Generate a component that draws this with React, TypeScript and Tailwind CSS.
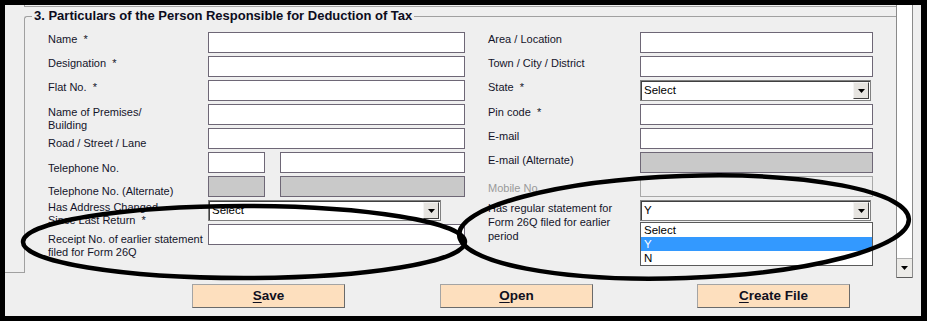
import React from 'react'

const LABEL = 'mt-[1px] text-[11px] leading-[13px] text-[#14142a]'
const INPUT = 'h-[21px] border border-[#6e6776] bg-white'
const GRAY = 'h-[21px] border border-[#6e6776] bg-[#c9c9c9]'

const Arrow = () => (
  <svg width="7" height="4" viewBox="0 0 7 4">
    <path d="M0 0h7L3.5 4z" fill="#000" />
  </svg>
)

const Select = ({ value, className }: { value: string; className: string }) => (
  <div
    className={`flex h-[21px] items-center border border-[#808080] bg-white shadow-[inset_1px_1px_0_#404040] ${className}`}
  >
    <span className="pl-[3px] pt-[1px] text-[11.5px] text-black">{value}</span>
    <span className="ml-auto mr-[1px] flex h-[17px] w-[16px] items-center justify-center border border-t-[#f4f4f4] border-l-[#f4f4f4] border-r-[#404040] border-b-[#404040] bg-[#e6e4e0]">
      <Arrow />
    </span>
  </div>
)

type RowProps = {
  left: React.ReactNode
  leftField?: React.ReactNode
  right?: React.ReactNode
  rightField?: React.ReactNode
  lpt?: string
  rpt?: string
}

const Row = ({ left, leftField, right, rightField, lpt = 'pt-0', rpt = 'pt-0' }: RowProps) => (
  <div className="flex h-[24px] items-start">
    <div className={`w-[160px] shrink-0 ${LABEL} ${lpt}`}>{left}</div>
    <div className="w-[257px] shrink-0">{leftField}</div>
    <div className={`ml-[23px] w-[152px] shrink-0 ${LABEL} ${rpt}`}>{right}</div>
    <div className="relative w-[233px] shrink-0">{rightField}</div>
  </div>
)

const Btn = ({ hot, rest, className }: { hot: string; rest: string; className: string }) => (
  <button
    className={`h-[24px] w-[153px] border border-[#a4a4a4] border-b-[#6a6a6a] border-r-[#6a6a6a] bg-[#fddfbe] text-[13.5px] font-bold text-[#101020] ${className}`}
  >
    <span className="underline underline-offset-2">{hot}</span>
    {rest}
  </button>
)

export default function App() {
  const star = '\u00a0 *'
  return (
    <div className="relative h-[321px] w-[927px] bg-black pb-[5px] pl-[5px] pr-[6px] pt-[5px] font-['Liberation_Sans',Arial,sans-serif]">
      <div className="flex h-[311px] w-[916px] flex-col bg-[#efefef]">
        {/* scroll area */}
        <div className="flex h-[273px]">
          <div className="flex h-[268px] w-[891px] flex-col overflow-hidden">
            <div className="ml-[19px] h-[2px] border-b border-l border-[#a0a0a0]" />
            <div className="mt-[1px] flex flex-1">
              <div className="w-[19px] shrink-0 border-b border-[#a0a0a0]" />
              <fieldset className="flex-1 rounded-tl-[3px] border-l border-t border-[#a0a0a0] pl-[23px]">
                <legend className="-ml-[16px] px-[2px] text-[13px] font-bold leading-[16px] text-[#0c0c20]">
                  3. Particulars of the Person Responsible for Deduction of Tax
                </legend>
                <div className="mt-[8px] flex flex-col">
                  <Row
                    left={<>Name{star}</>}
                    leftField={<div className={INPUT} />}
                    right="Area / Location"
                    rightField={<div className={INPUT} />}
                  />
                  <Row
                    left={<>Designation{star}</>}
                    leftField={<div className={INPUT} />}
                    right="Town / City / District"
                    rightField={<div className={INPUT} />}
                  />
                  <Row
                    left={<>Flat No.{star}</>}
                    leftField={<div className={INPUT} />}
                    right={<>State{star}</>}
                    rightField={<Select value="Select" className="w-[231px]" />}
                  />
                  <Row
                    left={
                      <>
                        Name of Premises/
                        <br />
                        Building
                      </>
                    }
                    lpt="pt-[1px]"
                    leftField={<div className={INPUT} />}
                    right={<>Pin code{star}</>}
                    rpt="pt-[1px]"
                    rightField={<div className={INPUT} />}
                  />
                  <Row
                    left="Road / Street / Lane"
                    lpt="pt-[8px]"
                    leftField={<div className={INPUT} />}
                    right="E-mail"
                    rpt="pt-[1px]"
                    rightField={<div className={INPUT} />}
                  />
                  <Row
                    left="Telephone No."
                    lpt="pt-[9px]"
                    leftField={
                      <div className="flex gap-[15px]">
                        <div className={`w-[57px] ${INPUT}`} />
                        <div className={`w-[185px] ${INPUT}`} />
                      </div>
                    }
                    right="E-mail (Alternate)"
                    rpt="pt-[1px]"
                    rightField={<div className={GRAY} />}
                  />
                  <Row
                    left="Telephone No. (Alternate)"
                    lpt="pt-[8px]"
                    leftField={
                      <div className="flex gap-[15px]">
                        <div className={`w-[57px] ${GRAY}`} />
                        <div className={`w-[185px] ${GRAY}`} />
                      </div>
                    }
                    right={<span className="text-[#9a9a9a]">Mobile No.</span>}
                    rpt="pt-[5px]"
                    rightField={<div className="h-[21px] border border-[#a8a8a8] bg-[#efefef]" />}
                  />
                  <Row
                    left={
                      <>
                        Has Address Changed
                        <br />
                        Since Last Return{star}
                      </>
                    }
                    leftField={<Select value="Select" className="w-[233px]" />}
                    right={
                      <span className="block leading-[14px]">
                        Has regular statement for
                        <br />
                        Form 26Q filed for earlier
                        <br />
                        period
                      </span>
                    }
                    rightField={
                      <>
                        <Select value="Y" className="w-[231px]" />
                        <div className="absolute left-0 top-[22px] z-10 w-[233px] border border-[#5a5a5a] bg-white text-[11.5px] leading-[14px] text-black">
                          <div className="h-[14px] pl-[3px]">Select</div>
                          <div className="h-[14px] bg-[#3399ff] pl-[3px] text-white">Y</div>
                          <div className="h-[14px] pl-[3px]">N</div>
                        </div>
                      </>
                    }
                  />
                  <Row
                    left={
                      <>
                        Receipt No. of earlier statement
                        <br />
                        filed for Form 26Q
                      </>
                    }
                    lpt="pt-[8px]"
                    leftField={<div className={INPUT} />}
                  />
                </div>
              </fieldset>
            </div>
          </div>
          {/* scrollbar */}
          <div className="flex h-[273px] w-[17px] flex-col border-l border-r border-[#8a8a8a] bg-white">
            <div className="flex-1" />
            <div className="flex h-[20px] items-center justify-center border-b border-t border-b-[#5a5a5a] border-t-[#b0b0b0] bg-[#ecebe8]">
              <Arrow />
            </div>
          </div>
        </div>
        {/* buttons */}
        <div className="mt-[6px] flex">
          <Btn hot="S" rest="ave" className="ml-[187px]" />
          <Btn hot="O" rest="pen" className="ml-[95px]" />
          <Btn hot="C" rest="reate File" className="ml-[104px]" />
        </div>
      </div>

      {/* hand-drawn annotation ellipses */}
      <svg
        width="927"
        height="321"
        className="pointer-events-none absolute left-0 top-0 z-20"
      >
        <ellipse cx="244" cy="242" rx="221" ry="36" fill="none" stroke="#000" strokeWidth="4.5" />
        <ellipse
          cx="684"
          cy="227"
          rx="225"
          ry="51"
          fill="none"
          stroke="#000"
          strokeWidth="4.5"
          transform="rotate(-2 684 227)"
        />
      </svg>
    </div>
  )
}
